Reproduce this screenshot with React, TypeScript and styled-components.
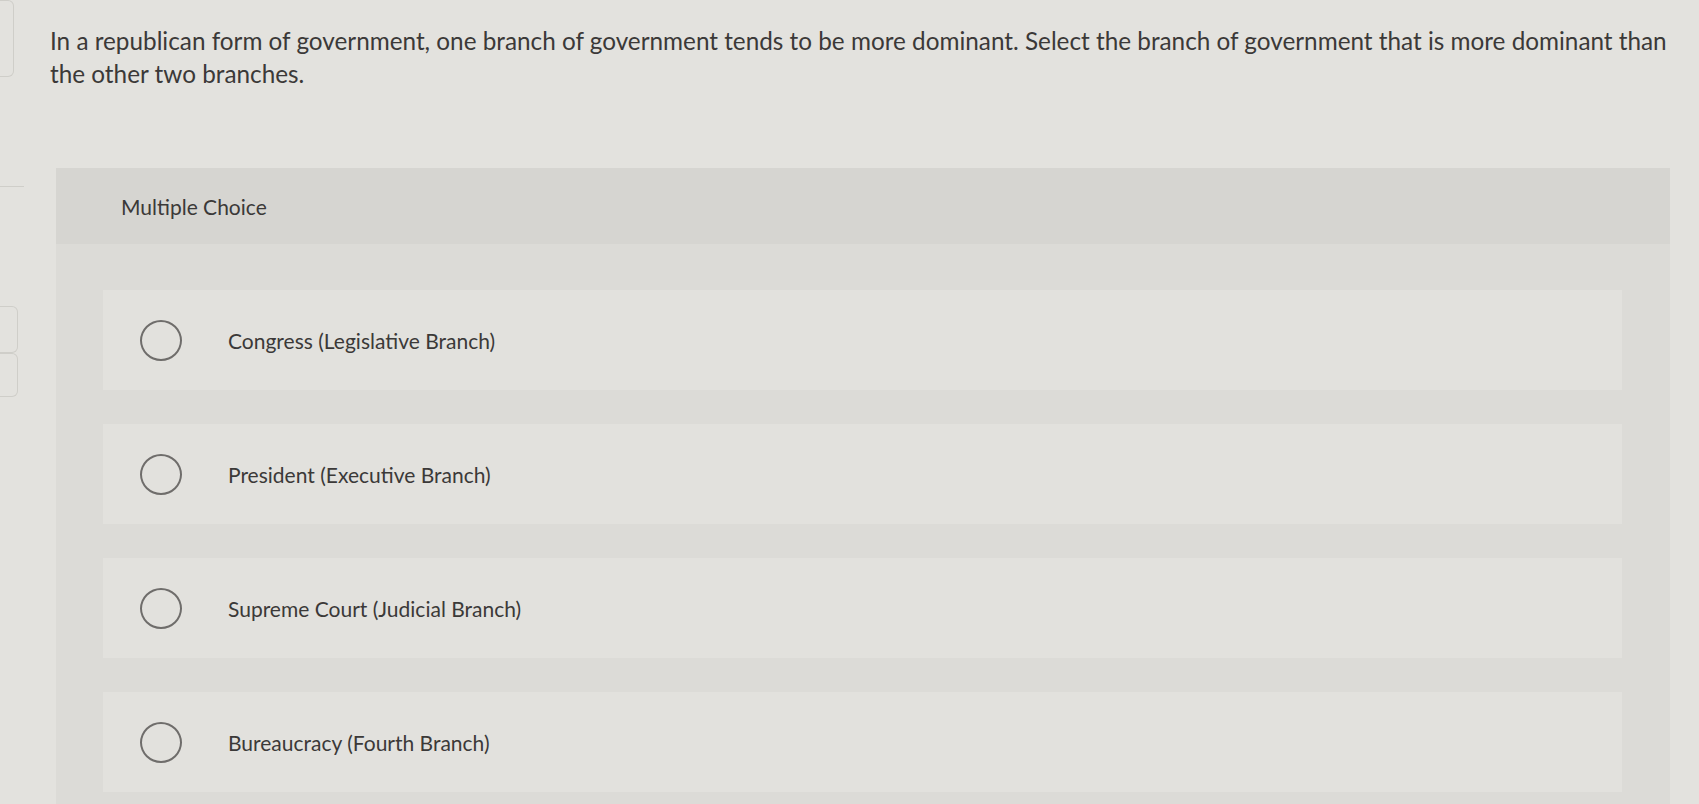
import React from "react";
import styled, { createGlobalStyle } from "styled-components";

const GlobalStyle = createGlobalStyle`
  html, body {
    margin: 0;
    padding: 0;
    background: #e3e2de;
    font-family: Lato, "Open Sans", sans-serif;
    color: #3b3938;
    overflow: hidden;
  }
`;

const Page = styled.div`
  display: flex;
  min-height: 804px;
`;

const Gutter = styled.div`
  width: 24px;
  flex-shrink: 0;
  display: flex;
  flex-direction: column;
`;

const EdgeTab = styled.div<{ $w: number; $h: number; $mt: number }>`
  width: ${(p) => p.$w}px;
  height: ${(p) => p.$h}px;
  margin-top: ${(p) => p.$mt}px;
  border: 1px solid #cfcec9;
  border-left: none;
  border-radius: 0 6px 6px 0;
  box-sizing: border-box;
`;

const EdgeRule = styled.div`
  width: 24px;
  height: 1px;
  margin-top: 109px;
  background: #cfcec9;
`;

const Main = styled.main`
  flex: 1;
  min-width: 0;
  padding: 24px 0 0 26px;
`;

const Question = styled.p`
  margin: 0;
  font-size: 24.3px;
  line-height: 33px;
  max-width: 1640px;
`;

const Panel = styled.section`
  margin: 78px 29px 0 6px;
  background: #dcdbd7;
  min-height: 700px;
`;

const PanelHeader = styled.header`
  height: 76px;
  display: flex;
  align-items: center;
  padding-left: 65px;
  background: #d6d5d1;
  font-size: 21px;
`;

const Options = styled.div`
  display: flex;
  flex-direction: column;
  gap: 34px;
  padding: 46px 48px 0 47px;
`;

const Option = styled.label`
  height: 100px;
  display: flex;
  align-items: center;
  padding-left: 37px;
  background: #e2e1dd;
  font-size: 21px;
  cursor: pointer;
`;

const Radio = styled.span`
  width: 42px;
  height: 41px;
  border: 2px solid #6f6d6b;
  border-radius: 50%;
  box-sizing: border-box;
  flex-shrink: 0;
  margin-right: 46px;
`;

const choices = [
  "Congress (Legislative Branch)",
  "President (Executive Branch)",
  "Supreme Court (Judicial Branch)",
  "Bureaucracy (Fourth Branch)",
];

export default function App() {
  return (
    <>
      <GlobalStyle />
      <Page>
        <Gutter>
          <EdgeTab $w={14} $h={77} $mt={0} />
          <EdgeRule />
          <EdgeTab $w={18} $h={47} $mt={119} />
          <EdgeTab $w={18} $h={44} $mt={0} />
        </Gutter>
        <Main>
          <Question>
            In a republican form of government, one branch of government tends to be more
            dominant. Select the branch of government that is more dominant than the other two
            branches.
          </Question>
          <Panel>
            <PanelHeader>Multiple Choice</PanelHeader>
            <Options>
              {choices.map((c) => (
                <Option key={c}>
                  <Radio />
                  {c}
                </Option>
              ))}
            </Options>
          </Panel>
        </Main>
      </Page>
    </>
  );
}
